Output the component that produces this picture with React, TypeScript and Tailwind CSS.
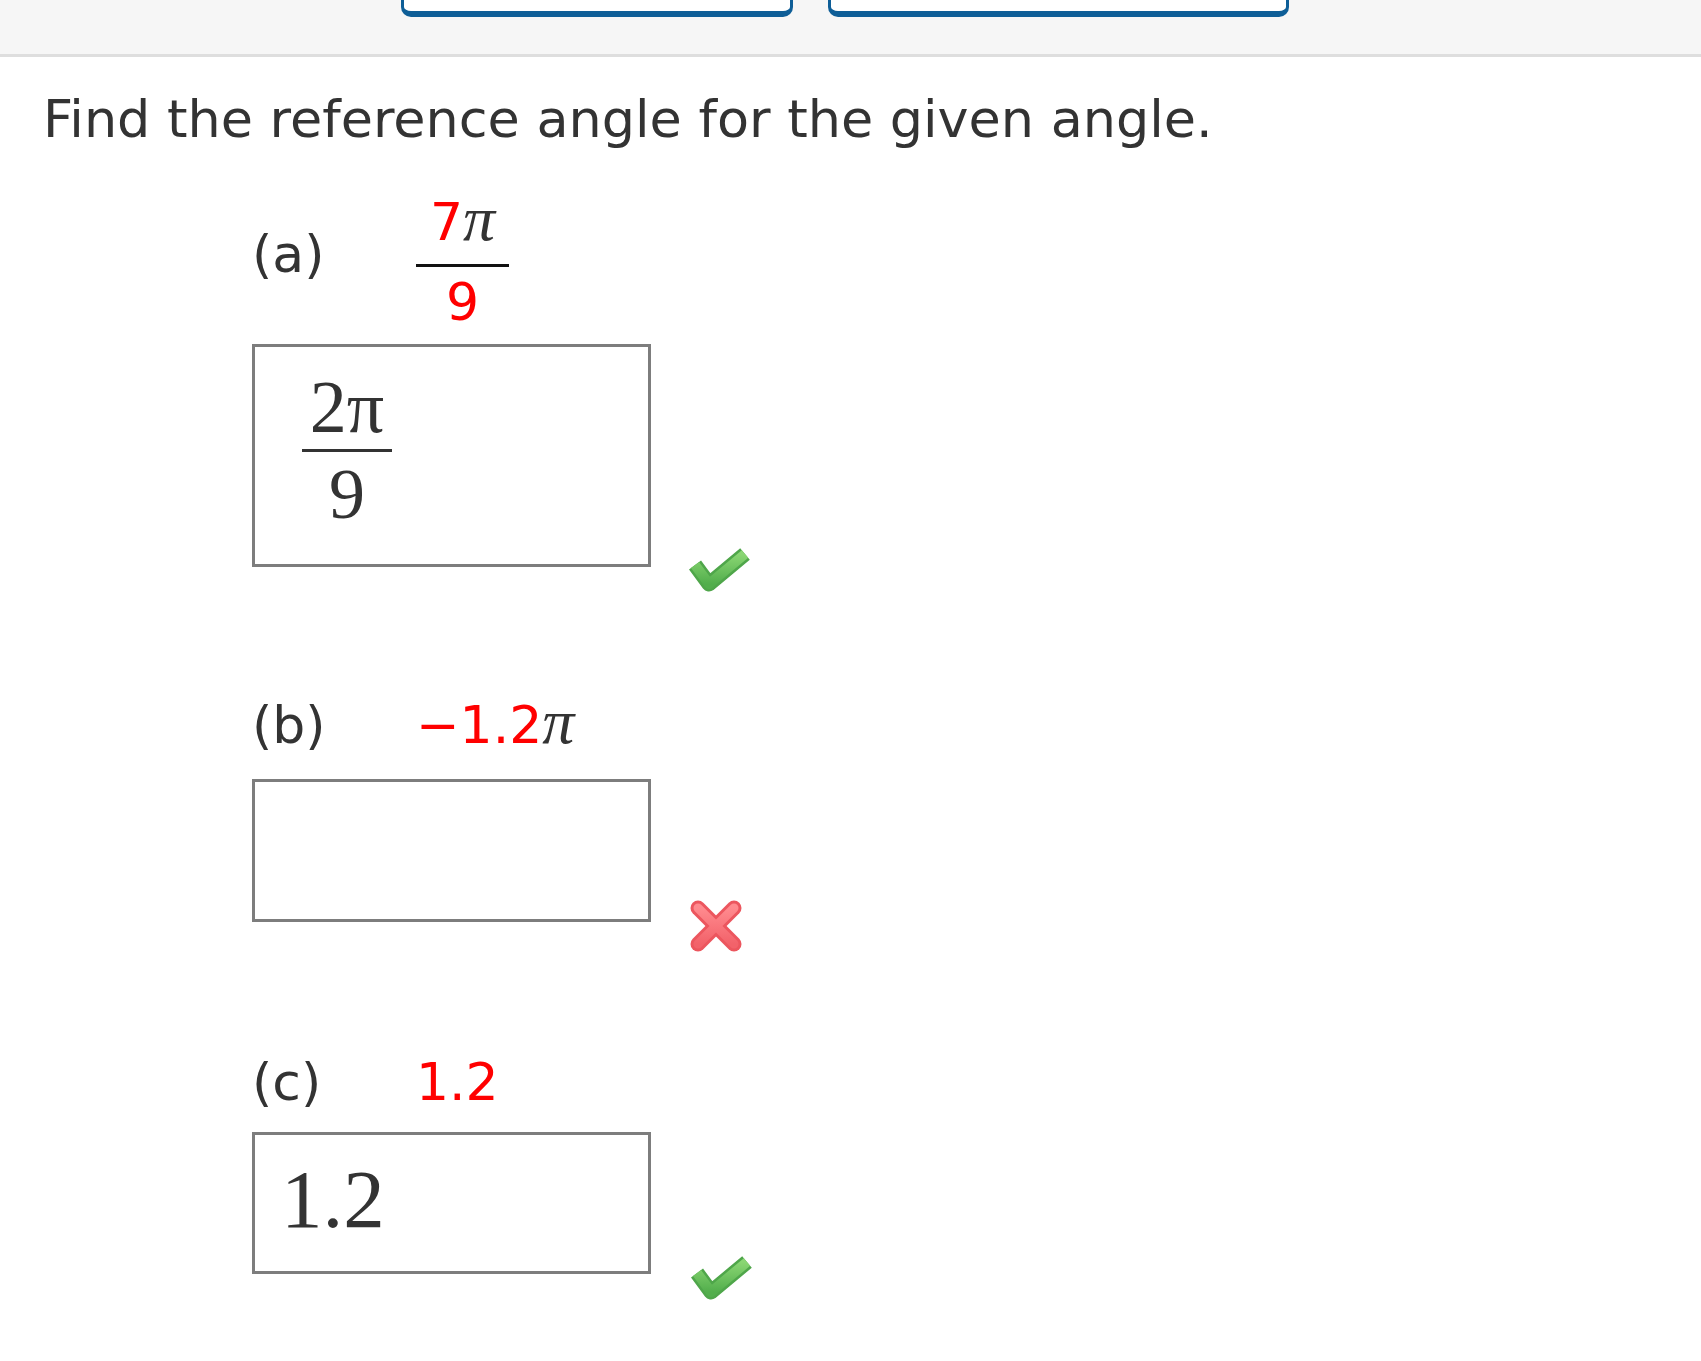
import React from "react"

function CheckMark({ id }: { id: string }) {
  return (
    <svg width="62" height="50" viewBox="0 0 62 50" className="shrink-0">
      <defs>
        <linearGradient id={id} x1="0" y1="0" x2="0" y2="1">
          <stop offset="0" stopColor="#8ad673" />
          <stop offset="1" stopColor="#52ae4c" />
        </linearGradient>
      </defs>
      <polyline
        points="6,20 20,39 56,9"
        fill="none"
        stroke="#4fa64a"
        strokeWidth="15"
        strokeLinejoin="round"
        strokeLinecap="butt"
      />
      <polyline
        points="6,20 20,39 56,9"
        fill="none"
        stroke={`url(#${id})`}
        strokeWidth="10"
        strokeLinejoin="round"
        strokeLinecap="butt"
      />
    </svg>
  )
}

function CrossMark() {
  return (
    <svg width="56" height="56" viewBox="0 0 56 56" className="shrink-0">
      <defs>
        <linearGradient id="crs" x1="0" y1="0" x2="0" y2="1">
          <stop offset="0" stopColor="#ff8a8e" />
          <stop offset="1" stopColor="#f2626a" />
        </linearGradient>
      </defs>
      <g fill="none" strokeLinecap="round">
        <line x1="10" y1="10" x2="46" y2="46" stroke="#ec565e" strokeWidth="15" />
        <line x1="46" y1="10" x2="10" y2="46" stroke="#ec565e" strokeWidth="15" />
        <line x1="10" y1="10" x2="46" y2="46" stroke="url(#crs)" strokeWidth="9" />
        <line x1="46" y1="10" x2="10" y2="46" stroke="url(#crs)" strokeWidth="9" />
      </g>
    </svg>
  )
}

function Pi() {
  return (
    <span className="font-['Liberation_Serif',serif] italic text-[64px] leading-[40px] text-[#333]">
      π
    </span>
  )
}

export default function App() {
  return (
    <div className="min-h-screen bg-white text-[#333] font-['DejaVu_Sans',sans-serif]">
      {/* Toolbar strip with cut-off buttons */}
      <header className="h-[57px] bg-[#f6f6f6] border-b-[3px] border-[#dedede] flex items-start">
        <div className="ml-[401px] w-[392px] h-[17px] bg-white border-x-[3px] border-b-[6px] border-[#0e5e97] rounded-b-[10px]" />
        <div className="ml-[35px] w-[461px] h-[17px] bg-white border-x-[3px] border-b-[6px] border-[#0e5e97] rounded-b-[10px]" />
      </header>

      <main className="pl-[43px] pt-[32px]">
        <p className="text-[52.4px] leading-[60px]">Find the reference angle for the given angle.</p>

        <div className="pl-[209px]">
          {/* (a) */}
          <div className="mt-[47px] flex items-center">
            <span className="w-[164px] text-[52px] leading-none pb-[16px]">(a)</span>
            <div className="flex flex-col items-center w-[93px] text-[52px] leading-none">
              <div className="pb-[16px]">
                <span className="text-[#f00]">7</span>
                <Pi />
              </div>
              <div className="h-[3px] w-full bg-[#111]" />
              <div className="pt-[9px] text-[#f00]">9</div>
            </div>
          </div>
          <div className="mt-[16px] flex items-end">
            <div className="w-[399px] h-[223px] border-[3px] border-[#7d7d7d] pl-[47px] pt-[23px] font-['Liberation_Serif',serif] text-[72px] leading-none text-[#333]">
              <div className="inline-flex flex-col items-center w-[90px]">
                <div className="pb-[5px] text-[74px]">2π</div>
                <div className="h-[3px] w-full bg-[#333]" />
                <div className="pt-[6px]">9</div>
              </div>
            </div>
            <div className="ml-[38px] -mb-[28px]">
              <CheckMark id="chk-a" />
            </div>
          </div>

          {/* (b) */}
          <div className="mt-[132px] flex text-[52px] leading-none">
            <span className="w-[164px]">(b)</span>
            <span>
              <span className="text-[#f00]">−1.2</span>
              <Pi />
            </span>
          </div>
          <div className="mt-[28px] flex items-end">
            <div className="w-[399px] h-[143px] border-[3px] border-[#7d7d7d]" />
            <div className="ml-[37px] -mb-[32px]">
              <CrossMark />
            </div>
          </div>

          {/* (c) */}
          <div className="mt-[134px] flex text-[52px] leading-none">
            <span className="w-[164px]">(c)</span>
            <span className="text-[#f00]">1.2</span>
          </div>
          <div className="mt-[24px] flex items-end">
            <div className="w-[399px] h-[142px] border-[3px] border-[#7d7d7d] pl-[26px] pt-[23px] font-['Liberation_Serif',serif] text-[83px] leading-none text-[#333]">
              1.2
            </div>
            <div className="ml-[40px] -mb-[29px]">
              <CheckMark id="chk-c" />
            </div>
          </div>
        </div>
      </main>
    </div>
  )
}
